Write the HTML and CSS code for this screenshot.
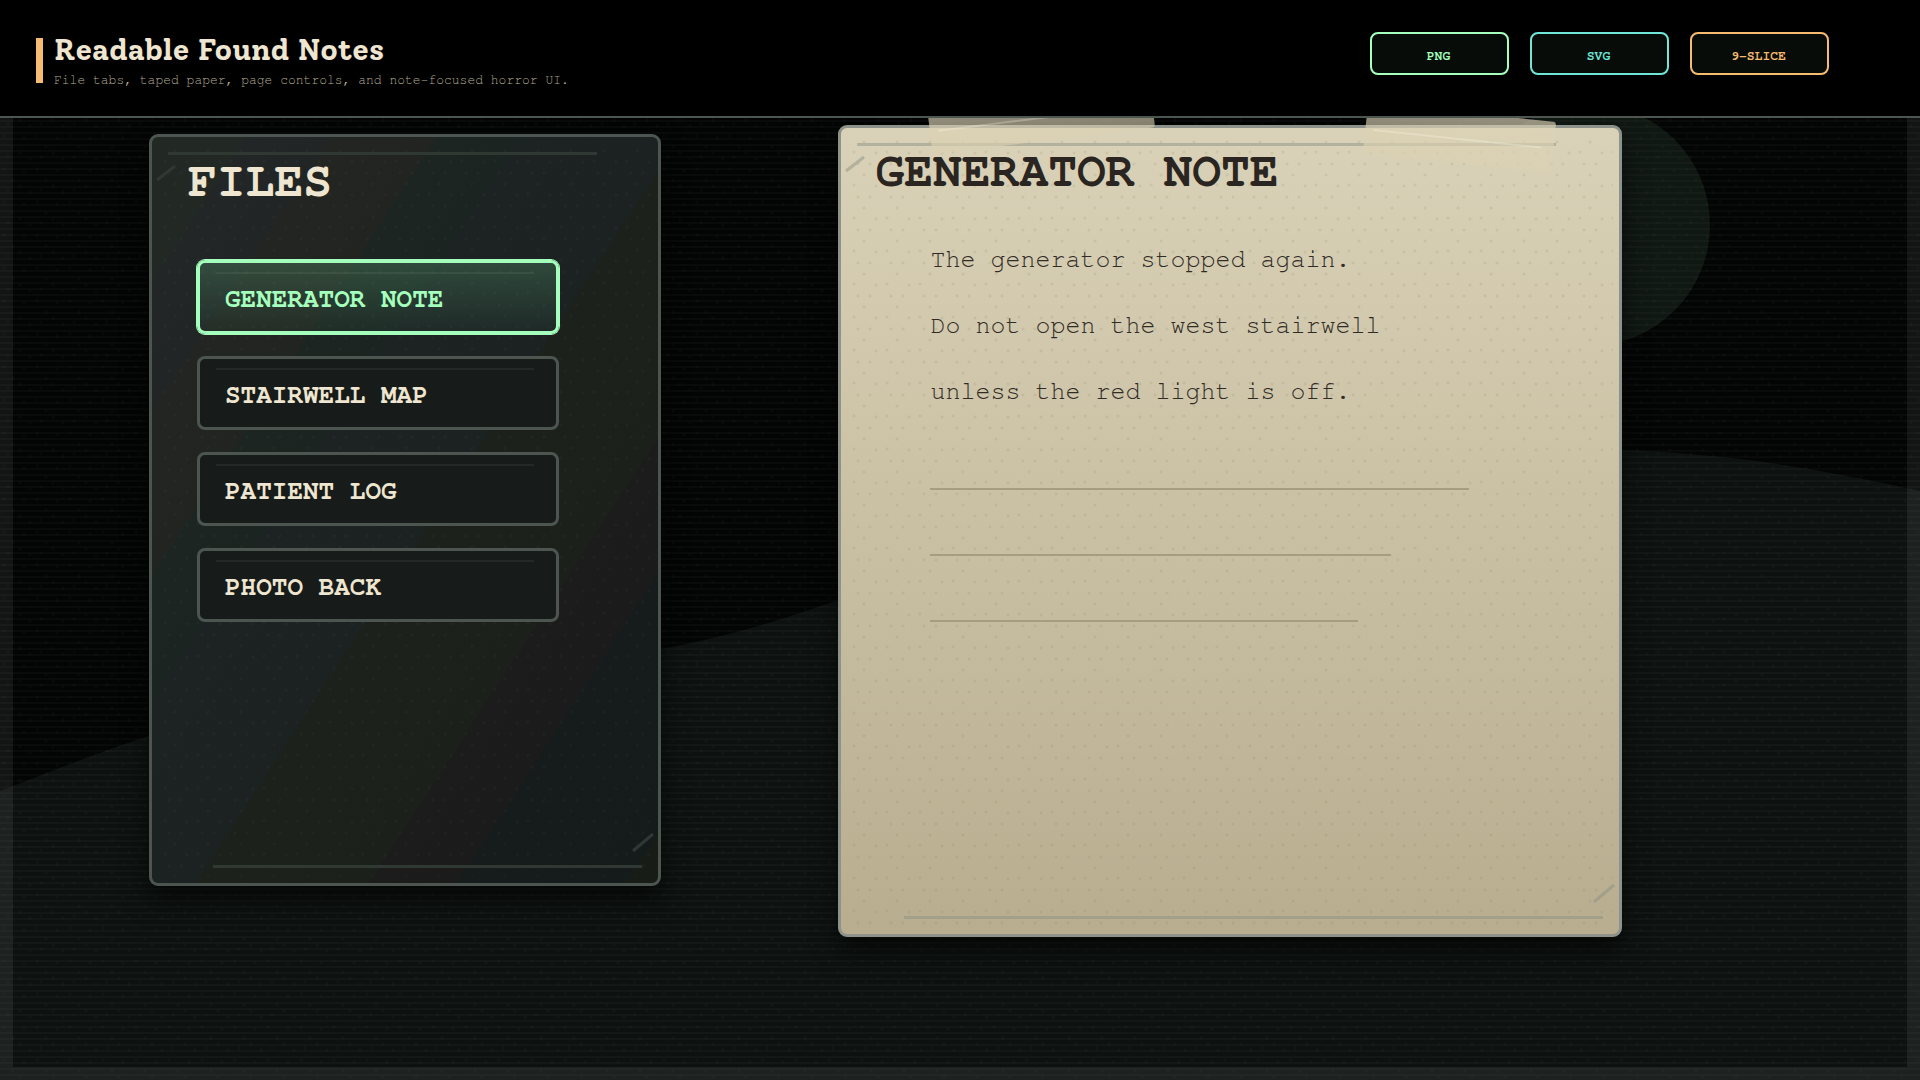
FILE: index.html
```html
<!DOCTYPE html>
<html lang="en">
<head>
<meta charset="utf-8">
<meta name="viewport" content="width=device-width, initial-scale=1">
<title>Readable Found Notes</title>
<link rel="stylesheet" href="styles.css">
</head>
<body>
<header class="topbar">
  <div class="brand">
    <h1 class="brand-title">Readable Found Notes</h1>
    <p class="brand-sub">File tabs, taped paper, page controls, and note-focused horror UI.</p>
  </div>
  <div class="exports">
    <button type="button" class="export export-png">PNG</button>
    <button type="button" class="export export-svg">SVG</button>
    <button type="button" class="export export-slice">9-SLICE</button>
  </div>
</header>
<main class="stage">
  <svg class="scenery" viewBox="0 0 1920 962" preserveAspectRatio="xMidYMin slice" aria-hidden="true">
    <circle cx="1589" cy="107" r="121" fill="#101813"/>
    <path d="M0 673C60 650 100 634 148 618C320 570 500 562 661 531C730 518 780 502 839 482C1100 382 1350 322 1621 332C1720 335 1820 350 1920 373V962H0Z" fill="#0d1210"/>
  </svg>
  <div class="grain" aria-hidden="true"></div>
  <section class="panel files" aria-labelledby="files-title">
    <span class="edge edge-top"></span><span class="edge edge-bottom"></span>
    <svg class="tick tick-top" viewBox="0 0 24 20" aria-hidden="true"><path d="M3 17L21 3"/></svg>
    <svg class="tick tick-bottom" viewBox="0 0 24 20" aria-hidden="true"><path d="M2 19L22 2"/></svg>
    <h2 class="panel-title" id="files-title">FILES</h2>
    <nav class="tabs">
      <button type="button" class="tab tab-active" aria-current="true">GENERATOR NOTE</button>
      <button type="button" class="tab">STAIRWELL MAP</button>
      <button type="button" class="tab">PATIENT LOG</button>
      <button type="button" class="tab">PHOTO BACK</button>
    </nav>
  </section>
  <article class="panel note" aria-labelledby="note-title">
    <span class="edge edge-top"></span><span class="edge edge-bottom"></span>
    <svg class="tick tick-top" viewBox="0 0 24 20" aria-hidden="true"><path d="M3 17L21 3"/></svg>
    <svg class="tick tick-bottom" viewBox="0 0 24 20" aria-hidden="true"><path d="M2 19L22 2"/></svg>
    <span class="tape tape-left"></span><span class="tape tape-right"></span>
    <h2 class="panel-title" id="note-title">GENERATOR NOTE</h2>
    <div class="note-body">
      <p>The generator stopped again.</p>
      <p>Do not open the west stairwell</p>
      <p>unless the red light is off.</p>
      <hr class="rule rule-long">
      <hr class="rule rule-mid">
      <hr class="rule rule-short">
    </div>
  </article>
</main>
</body>
</html>
```
FILE: styles.css
```css
:root {
  --mono: FreeMono, "Liberation Mono", monospace;
  --slab: Solway, Rokkitt, "DejaVu Serif", serif;
  --line: #4c5550;
  --cream: #eee6d0;
  --mint: #a5ffbd;
}

* { box-sizing: border-box; }

body {
  margin: 0;
  min-height: 100vh;
  display: flex;
  flex-direction: column;
  background: #000;
  font-family: var(--mono);
  color: var(--cream);
}

h1, h2, p { margin: 0; }

button { font-family: inherit; cursor: pointer; }

/* Top bar */
.topbar {
  position: relative;
  z-index: 2;
  display: flex;
  justify-content: space-between;
  align-items: flex-start;
  min-height: 118px;
  padding: 32px 91px 32px 36px;
  background: #000;
  border-bottom: 2px solid var(--line);
}

.brand {
  margin-top: 6px;
  height: 45px;
  padding-left: 11px;
  border-left: 7px solid #f5bb71;
}

.brand-title {
  font-family: var(--slab);
  font-size: 30px;
  line-height: 24px;
  font-weight: 700;
}

.brand-sub {
  margin-top: 11px;
  font-size: 13px;
  line-height: 16px;
  color: #b5ad95;
}

.exports { display: flex; gap: 21px; }

.export {
  width: 139px;
  height: 43px;
  padding: 6px 2px 0 0;
  border: 2px solid currentColor;
  border-radius: 8px;
  background: #070c09;
  font-size: 13px;
  font-weight: 700;
}

.export-png { color: var(--mint); }
.export-svg { color: #70e6d8; }
.export-slice { color: #f5bb71; }

/* Stage */
.stage {
  position: relative;
  flex: 1;
  display: grid;
  grid-template-columns: 512fr 783fr;
  column-gap: 177px;
  align-items: start;
  padding: 7px 298px 142px 149px;
  overflow: hidden;
  background: #030504;
}

.scenery {
  position: absolute;
  inset: 0;
  width: 100%;
  height: 100%;
}

.grain {
  position: absolute;
  inset: 0;
  border: 13px solid rgba(255, 255, 255, .065);
  border-top: 0;
}

.grain::before {
  content: "";
  position: absolute;
  inset: 0 -13px -13px;
  background:
    radial-gradient(circle at 13px 29px, var(--dot) 1px, transparent 2px),
    radial-gradient(circle at 20px 2px, var(--dot) 1px, transparent 2px),
    radial-gradient(circle at 30px 8px, var(--dot) 1px, transparent 2px),
    radial-gradient(circle at 8px 6px, var(--dot) 1px, transparent 2px),
    radial-gradient(circle at 4px 18px, var(--dot) 1px, transparent 2px),
    radial-gradient(circle at 24px 20px, var(--dot) 1px, transparent 2px),
    linear-gradient(rgba(255, 255, 255, .025) 2px, transparent 2px);
  background-size: 33px 33px, 33px 33px, 33px 33px, 33px 33px, 33px 33px, 33px 33px, 100% 6px;
  background-position: 0 0, 0 0, 0 0, 0 0, 0 0, 0 0, 0 2px;
  --dot: rgba(255, 255, 255, .02);
}

/* Panels */
.panel {
  position: relative;
  border: 3px solid var(--line);
  border-radius: 9px;
  box-shadow: 0 14px 26px rgba(0, 0, 0, .65);
}

.panel::before {
  content: "";
  position: absolute;
  inset: 6px;
  background:
    radial-gradient(circle at 17px 8px, var(--dot) 1px, transparent 2px),
    radial-gradient(circle at 29px 19px, var(--dot) 1px, transparent 2px),
    radial-gradient(circle at 7px 18px, var(--dot) 1px, transparent 2px),
    radial-gradient(circle at 11px 30px, var(--dot) 1px, transparent 2px),
    radial-gradient(circle at 23px 30px, var(--dot) 1px, transparent 2px);
  background-size: 33px 33px;
}

.panel-title {
  position: relative;
  font-size: 48px;
  line-height: 48px;
  font-weight: 700;
}

.edge {
  position: absolute;
  height: 3px;
  background: var(--edge);
}

.edge-top { top: 15px; left: 16px; }
.edge-bottom { bottom: 15px; right: 16px; }

.tick {
  position: absolute;
  width: 24px;
  height: 20px;
  fill: none;
  stroke: var(--edge);
  stroke-width: 3;
}

.tick-top { top: 26px; left: 2px; }
.tick-bottom { bottom: 31px; right: 3px; }

.files {
  --edge: #303834;
  --dot: rgba(255, 255, 255, .025);
  margin-top: 9px;
  min-height: 752px;
  padding: 21px 36px;
  background: linear-gradient(123deg,
    #222924 79px, #222626 79px, #212526 149px, #232522 149px, #222421 239px,
    #1d2522 239px, #1c2422 309px, #1d2223 309px, #1c2122 443px,
    #1d211c 443px, #1c201b 588px, #1d1c1c 588px, #1c1b1b 662px,
    #161b1b 662px, #151a1a 804px, #181c17 804px);
}

.files .edge { width: 429px; }

.tabs {
  position: relative;
  display: grid;
  gap: 22px;
  width: 362px;
  max-width: 100%;
  margin: 54px 0 0 9px;
}

.tab {
  position: relative;
  height: 74px;
  padding: 3px 25px 0;
  border: 3px solid var(--line);
  border-radius: 8px;
  background: #171b1a;
  color: var(--cream);
  font-size: 26px;
  font-weight: 700;
  text-align: left;
}

.tab::before {
  content: "";
  position: absolute;
  top: 9px;
  left: 16px;
  right: 22px;
  height: 2px;
  background: rgba(255, 255, 255, .06);
}

.tab-active {
  border-color: var(--mint);
  background: linear-gradient(rgba(120, 230, 160, .2), rgba(60, 140, 100, .08));
  color: var(--mint);
  box-shadow: 0 0 0 1px var(--mint);
}

/* Note */
.note {
  --edge: rgba(140, 146, 132, .5);
  --dot: rgba(130, 120, 80, .14);
  min-height: 812px;
  padding: 20px 34px;
  border-color: #8d938a;
  background: linear-gradient(#dad2b8, #b8ad8f);
  color: #2a2520;
}

.note .edge { width: 699px; max-width: 92%; }

.tape {
  position: absolute;
  background: linear-gradient(rgba(221, 211, 184, .66), rgba(219, 209, 178, .6));
  border-radius: 3px;
}

.tape::after {
  content: "";
  position: absolute;
  left: 8px;
  right: 12px;
  top: 50%;
  height: 2px;
  background: rgba(255, 255, 240, .25);
}

.tape-left {
  top: -35px;
  left: 88px;
  width: 224px;
  height: 48px;
  transform: rotate(-7deg);
}

.tape-right {
  top: -16px;
  left: 524px;
  width: 189px;
  height: 51px;
  transform: rotate(6deg);
}

.note-body {
  position: relative;
  margin: 31px 0 0 55px;
  font-size: 25px;
  line-height: 66px;
  color: #302b24;
}

.rule {
  height: 2px;
  margin: 0 0 64px;
  border: 0;
  background: #a59d82;
  max-width: 100%;
}

.rule-long { width: 539px; margin-top: 63px; }
.rule-mid { width: 461px; }
.rule-short { width: 428px; margin-bottom: 0; }
```
